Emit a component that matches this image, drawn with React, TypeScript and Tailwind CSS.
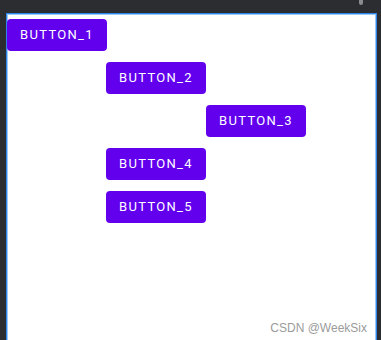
const buttons = [
  { label: 'BUTTON_1', offset: 'ml-0' },
  { label: 'BUTTON_2', offset: 'ml-[99px]' },
  { label: 'BUTTON_3', offset: 'ml-[199px]' },
  { label: 'BUTTON_4', offset: 'ml-[99px]' },
  { label: 'BUTTON_5', offset: 'ml-[99px]' },
];

export default function App() {
  return (
    <div className="relative h-[340px] w-[381px] overflow-hidden bg-[#2b2d30] pl-[6px] pt-[13px]">
      <div className="absolute left-[359px] top-0 h-[5px] w-[4px] rounded-b-sm bg-[#8a8c90]" />
      <div className="relative h-[340px] w-[371px] border border-[#2f86ea] bg-white shadow-[inset_0_0_0_1px_#9cc8f8]">
        <div className="flex flex-col items-start gap-[11px] pt-[5px]">
          {buttons.map((b) => (
            <button
              key={b.label}
              type="button"
              className={`${b.offset} flex h-[32px] w-[100px] items-center justify-center rounded-[4px] bg-[#6200ee] font-['Roboto',sans-serif] text-[13px] font-normal tracking-[0.1em] text-white`}
            >
              {b.label}
            </button>
          ))}
        </div>
        <span className="absolute right-[9px] top-[305px] font-['Liberation_Sans',sans-serif] text-[12px] text-[#9b9b9b]">
          CSDN @WeekSix
        </span>
      </div>
    </div>
  );
}
